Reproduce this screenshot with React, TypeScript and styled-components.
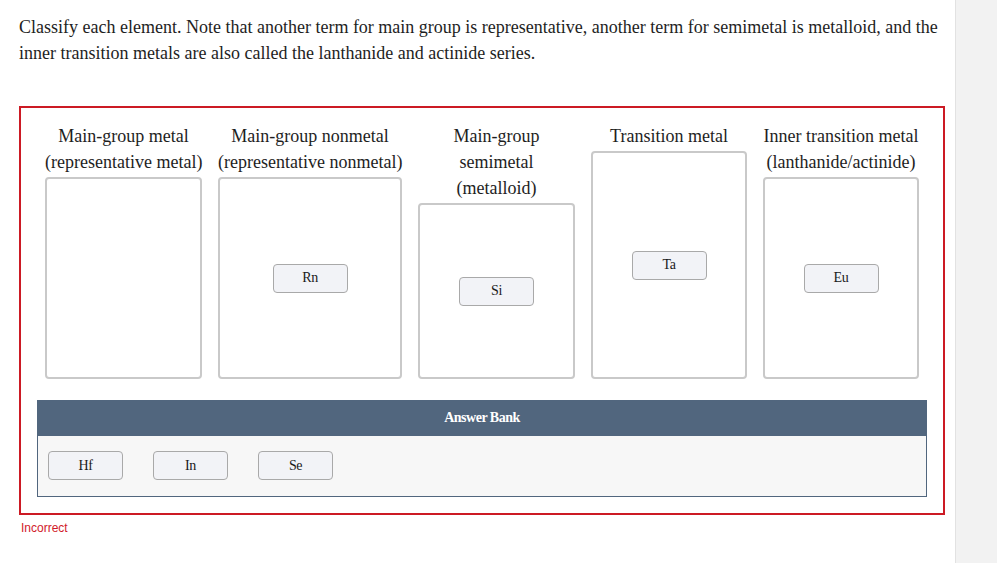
import * as React from 'react';
import styled, { createGlobalStyle } from 'styled-components';

const GlobalStyle = createGlobalStyle`
    html, body {
        margin: 0;
        padding: 0;
        background: #ffffff;
    }
    body {
        font-family: 'Liberation Serif', 'Times New Roman', serif;
        color: #1e1e1e;
    }
`;

const Page = styled.div`
    display: flex;
    min-height: 100vh;
`;

const Main = styled.main`
    width: 955px;
    flex-shrink: 0;
    box-sizing: border-box;
    padding: 14px 10px 0 19px;
`;

const Sidebar = styled.aside`
    flex: 1;
    background-color: #f2f2f2;
    border-left: 1px solid #e2e2e2;
`;

const Prompt = styled.p`
    margin: 0;
    font-size: 18px;
    line-height: 26px;
`;

const Card = styled.section`
    margin-top: 40px;
    border: 2px solid #cc1a24;
    padding: 15px 16px 16px;
`;

const ColumnRow = styled.div`
    display: flex;
    gap: 16px;
    height: 256px;
    padding: 0 8px;
`;

const Column = styled.div<{ $width: number }>`
    display: flex;
    flex-direction: column;
    width: ${p => p.$width}px;
    flex-shrink: 0;
`;

const ColumnHeader = styled.div`
    font-size: 18px;
    line-height: 26px;
    text-align: center;
    white-space: nowrap;
    & span {
        display: block;
    }
`;

const DropBox = styled.div`
    flex: 1;
    margin-top: 2px;
    border: 2px solid #c9c9c9;
    border-radius: 4px;
    display: flex;
    align-items: center;
    justify-content: center;
`;

const Chip = styled.div`
    box-sizing: border-box;
    width: 75px;
    height: 29px;
    border: 1px solid #a9a9a9;
    border-radius: 4px;
    background-color: #f2f3f7;
    display: flex;
    align-items: center;
    justify-content: center;
    font-size: 14px;
    letter-spacing: -0.4px;
    color: #1a1a1a;
`;

const Bank = styled.div`
    margin-top: 21px;
`;

const BankHeader = styled.div`
    height: 36px;
    background-color: #51667e;
    color: #ffffff;
    font-weight: bold;
    font-size: 14px;
    letter-spacing: -0.5px;
    display: flex;
    align-items: center;
    justify-content: center;
`;

const BankBody = styled.div`
    box-sizing: border-box;
    height: 61px;
    background-color: #f7f7f7;
    border: 1px solid #51667e;
    border-top: none;
    padding: 15px 10px 0;
    display: flex;
    gap: 30px;
    align-items: flex-start;
`;

const Feedback = styled.div`
    margin-top: 6px;
    font-family: 'Liberation Sans', Arial, sans-serif;
    font-size: 12px;
    line-height: 14px;
    color: #d11a2a;
    padding-left: 2px;
`;

type Category = {
    lines: string[];
    width: number;
    items: string[];
};

const categories: Category[] = [
    { lines: ['Main-group metal', '(representative metal)'], width: 157, items: [] },
    { lines: ['Main-group nonmetal', '(representative nonmetal)'], width: 184, items: ['Rn'] },
    { lines: ['Main-group', 'semimetal', '(metalloid)'], width: 157, items: ['Si'] },
    { lines: ['Transition metal'], width: 156, items: ['Ta'] },
    { lines: ['Inner transition metal', '(lanthanide/actinide)'], width: 156, items: ['Eu'] },
];

const bankItems = ['Hf', 'In', 'Se'];

const App: React.FC = () => {
    return (
        <Page>
            <GlobalStyle />
            <Main>
                <Prompt>
                    Classify each element. Note that another term for main group is representative, another term
                    for semimetal is metalloid, and the inner transition metals are also called the lanthanide and
                    actinide series.
                </Prompt>
                <Card>
                    <ColumnRow>
                        {categories.map(cat => (
                            <Column key={cat.lines[0]} $width={cat.width}>
                                <ColumnHeader>
                                    {cat.lines.map(line => (
                                        <span key={line}>{line}</span>
                                    ))}
                                </ColumnHeader>
                                <DropBox>
                                    {cat.items.map(item => (
                                        <Chip key={item}>{item}</Chip>
                                    ))}
                                </DropBox>
                            </Column>
                        ))}
                    </ColumnRow>
                    <Bank>
                        <BankHeader>Answer Bank</BankHeader>
                        <BankBody>
                            {bankItems.map(item => (
                                <Chip key={item}>{item}</Chip>
                            ))}
                        </BankBody>
                    </Bank>
                </Card>
                <Feedback>Incorrect</Feedback>
            </Main>
            <Sidebar />
        </Page>
    );
};

export default App;
